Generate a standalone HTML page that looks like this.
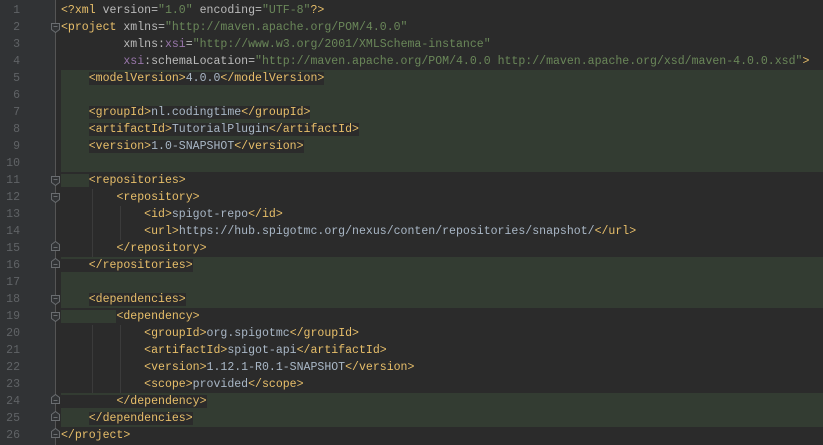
<!DOCTYPE html>
<html><head><meta charset="utf-8"><style>
html,body{margin:0;padding:0;}
body{width:823px;height:445px;background:#2b2b2b;position:relative;overflow:hidden;font-family:"Liberation Mono",monospace;font-size:11.55px;}
.gut{position:absolute;left:0;top:0;width:55px;height:445px;background:#313335;}
.div{position:absolute;left:55px;top:0;width:1px;height:445px;background:#555555;}
.ln{position:absolute;left:0;width:20px;text-align:right;color:#606366;height:17px;line-height:17px;}
.row{position:absolute;left:61px;width:762px;height:17px;line-height:17px;white-space:pre;color:#a9b7c6;}
.g{background:#333c32;}
.d{background:#2b2b2b;}
.gr{background:#333c32;}
.t{color:#e8bf6a;}
.a{color:#bababa;}
.v{color:#6a8759;}
.n{color:#9876aa;}
.guide{position:absolute;width:1px;background:#3b3b3b;}
</style></head><body>
<div class="gut"></div>
<div class="div"></div>

<div class="guide" style="left:92px;top:189px;height:68px"></div>
<div class="guide" style="left:120px;top:206px;height:34px"></div>
<div class="guide" style="left:92px;top:325px;height:68px"></div>
<div class="guide" style="left:120px;top:325px;height:68px"></div>

<div class="ln" style="top:2px">1</div>
<div class="ln" style="top:19px">2</div>
<div class="ln" style="top:36px">3</div>
<div class="ln" style="top:53px">4</div>
<div class="ln" style="top:70px">5</div>
<div class="ln" style="top:87px">6</div>
<div class="ln" style="top:104px">7</div>
<div class="ln" style="top:121px">8</div>
<div class="ln" style="top:138px">9</div>
<div class="ln" style="top:155px">10</div>
<div class="ln" style="top:172px">11</div>
<div class="ln" style="top:189px">12</div>
<div class="ln" style="top:206px">13</div>
<div class="ln" style="top:223px">14</div>
<div class="ln" style="top:240px">15</div>
<div class="ln" style="top:257px">16</div>
<div class="ln" style="top:274px">17</div>
<div class="ln" style="top:291px">18</div>
<div class="ln" style="top:308px">19</div>
<div class="ln" style="top:325px">20</div>
<div class="ln" style="top:342px">21</div>
<div class="ln" style="top:359px">22</div>
<div class="ln" style="top:376px">23</div>
<div class="ln" style="top:393px">24</div>
<div class="ln" style="top:410px">25</div>
<div class="ln" style="top:427px">26</div>

<div class="row" style="top:2px"><span class="t">&lt;?xml </span><span class="a">version=</span><span class="v">"1.0"</span> <span class="a">encoding=</span><span class="v">"UTF-8"</span><span class="t">?&gt;</span></div>
<div class="row" style="top:19px"><span class="t">&lt;project </span><span class="a">xmlns=</span><span class="v">"http://maven.apache.org/POM/4.0.0"</span></div>
<div class="row" style="top:36px">         <span class="a">xmlns:</span><span class="n">xsi</span><span class="a">=</span><span class="v">"http://www.w3.org/2001/XMLSchema-instance"</span></div>
<div class="row" style="top:53px">         <span class="n">xsi</span><span class="a">:schemaLocation=</span><span class="v">"http://maven.apache.org/POM/4.0.0 http://maven.apache.org/xsd/maven-4.0.0.xsd"</span><span class="t">&gt;</span></div>
<div class="row g" style="top:70px">    <span class="d"><span class="t">&lt;modelVersion&gt;</span>4.0.0<span class="t">&lt;/modelVersion&gt;</span></span></div>
<div class="row g" style="top:87px"></div>
<div class="row g" style="top:104px">    <span class="d"><span class="t">&lt;groupId&gt;</span>nl.codingtime<span class="t">&lt;/groupId&gt;</span></span></div>
<div class="row g" style="top:121px">    <span class="d"><span class="t">&lt;artifactId&gt;</span>TutorialPlugin<span class="t">&lt;/artifactId&gt;</span></span></div>
<div class="row g" style="top:138px">    <span class="d"><span class="t">&lt;version&gt;</span>1.0-SNAPSHOT<span class="t">&lt;/version&gt;</span></span></div>
<div class="row g" style="top:155px"></div>
<div class="row" style="top:172px"><span class="gr">    </span><span class="t">&lt;repositories&gt;</span></div>
<div class="row" style="top:189px">        <span class="t">&lt;repository&gt;</span></div>
<div class="row" style="top:206px">            <span class="t">&lt;id&gt;</span>spigot-repo<span class="t">&lt;/id&gt;</span></div>
<div class="row" style="top:223px">            <span class="t">&lt;url&gt;</span>https://hub.spigotmc.org/nexus/conten/repositories/snapshot/<span class="t">&lt;/url&gt;</span></div>
<div class="row" style="top:240px">        <span class="t">&lt;/repository&gt;</span></div>
<div class="row g" style="top:257px"><span class="d">    <span class="t">&lt;/repositories&gt;</span></span></div>
<div class="row g" style="top:274px"></div>
<div class="row g" style="top:291px">    <span class="d"><span class="t">&lt;dependencies&gt;</span></span></div>
<div class="row" style="top:308px"><span class="gr">        </span><span class="t">&lt;dependency&gt;</span></div>
<div class="row" style="top:325px">            <span class="t">&lt;groupId&gt;</span>org.spigotmc<span class="t">&lt;/groupId&gt;</span></div>
<div class="row" style="top:342px">            <span class="t">&lt;artifactId&gt;</span>spigot-api<span class="t">&lt;/artifactId&gt;</span></div>
<div class="row" style="top:359px">            <span class="t">&lt;version&gt;</span>1.12.1-R0.1-SNAPSHOT<span class="t">&lt;/version&gt;</span></div>
<div class="row" style="top:376px">            <span class="t">&lt;scope&gt;</span>provided<span class="t">&lt;/scope&gt;</span></div>
<div class="row g" style="top:393px"><span class="d">        <span class="t">&lt;/dependency&gt;</span></span></div>
<div class="row g" style="top:410px">    <span class="d"><span class="t">&lt;/dependencies&gt;</span></span></div>
<div class="row" style="top:427px"><span class="t">&lt;/project&gt;</span></div>

<svg width="823" height="445" style="position:absolute;left:0;top:0" fill="#313335" stroke="#6a6d70" stroke-width="1">
<g>
<path d="M51.5 23.5h8v6l-4 3l-4-3z"/><path d="M53.5 26.5h4"/>
<path d="M51.5 176.5h8v6l-4 3l-4-3z"/><path d="M53.5 179.5h4"/>
<path d="M51.5 193.5h8v6l-4 3l-4-3z"/><path d="M53.5 196.5h4"/>
<path d="M51.5 295.5h8v6l-4 3l-4-3z"/><path d="M53.5 298.5h4"/>
<path d="M51.5 312.5h8v6l-4 3l-4-3z"/><path d="M53.5 315.5h4"/>
</g>
<g>
<path d="M51.5 244.5l4-3l4 3v6h-8z"/><path d="M53.5 247.5h4"/>
<path d="M51.5 261.5l4-3l4 3v6h-8z"/><path d="M53.5 264.5h4"/>
<path d="M51.5 397.5l4-3l4 3v6h-8z"/><path d="M53.5 400.5h4"/>
<path d="M51.5 414.5l4-3l4 3v6h-8z"/><path d="M53.5 417.5h4"/>
<path d="M51.5 431.5l4-3l4 3v6h-8z"/><path d="M53.5 434.5h4"/>
</g>
</svg>
</body></html>
